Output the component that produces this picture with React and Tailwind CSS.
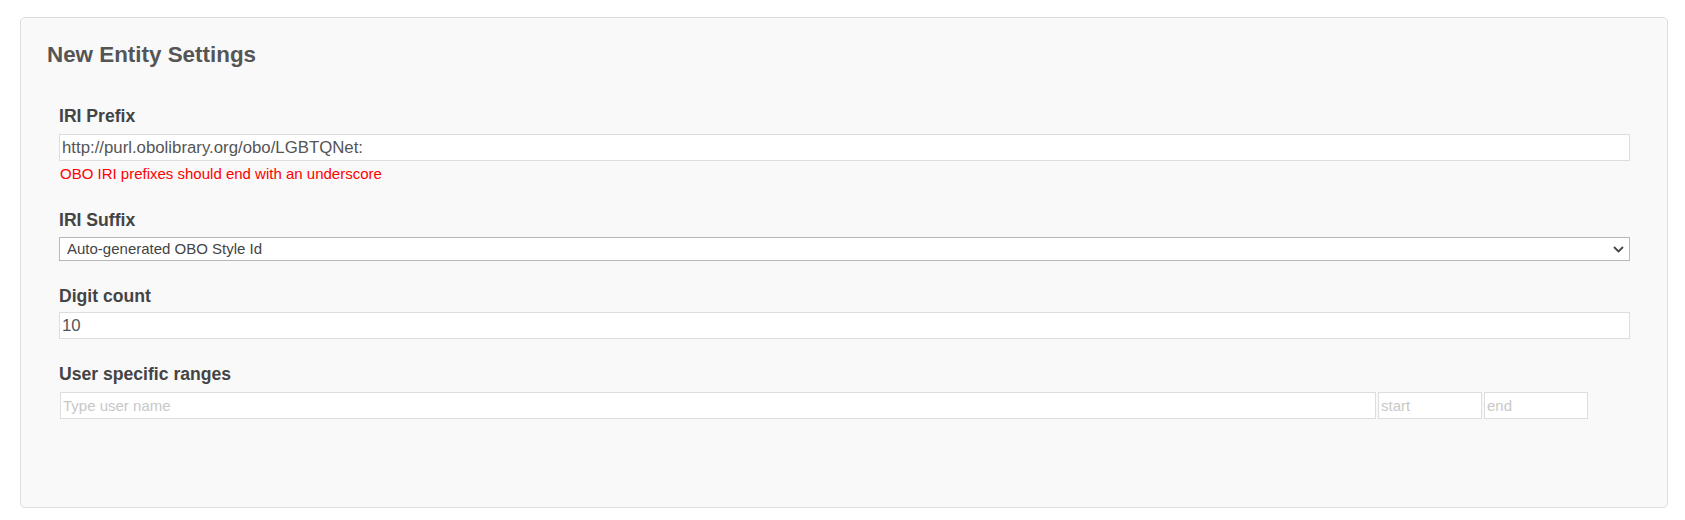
import React from 'react';

const Label = ({ children, className = '' }) => (
  <div className={`text-[17.6px] leading-[20px] font-bold text-[#444] ${className}`}>{children}</div>
);

export default function App() {
  return (
    <div className="min-h-[520px] bg-white pt-[17px] pl-[20px] font-['Liberation_Sans',Arial,sans-serif] text-[15px]">
      <div className="w-[1648px] h-[491px] rounded-[5px] border border-[#dddddd] bg-[#f9f9f9] pt-[24px] pl-[26px] pr-[37px]">
        <h2 className="text-[22.4px] leading-[26px] font-bold text-[#555]">New Entity Settings</h2>

        <div className="pl-[12px]">
          <Label className="mt-[38px]">IRI Prefix</Label>
          <input
            type="text"
            className="mt-[8px] block h-[27px] w-full border border-[#ddd] bg-white px-[2px] text-[16.8px] text-[#555] outline-none"
            defaultValue="http://purl.obolibrary.org/obo/LGBTQNet:"
          />
          <div className="mt-[4px] pl-[1px] text-[15px] leading-[18px] text-[#ff0000]">
            OBO IRI prefixes should end with an underscore
          </div>

          <Label className="mt-[27px]">IRI Suffix</Label>
          <div className="relative mt-[7px]">
            <select className="block h-[24px] w-full appearance-none border border-[#b8b8b8] bg-white pl-[7px] text-[15px] text-[#444] outline-none">
              <option>Auto-generated OBO Style Id</option>
            </select>
            <svg
              className="pointer-events-none absolute right-[6px] top-[9px]"
              width="11"
              height="7"
              viewBox="0 0 11 7"
              fill="none"
            >
              <path d="M1 1l4.5 4.5L10 1" stroke="#444" strokeWidth="1.8" />
            </svg>
          </div>

          <Label className="mt-[25px]">Digit count</Label>
          <input
            type="text"
            className="mt-[6px] block h-[27px] w-full border border-[#ddd] bg-white px-[2px] text-[16.8px] text-[#555] outline-none"
            defaultValue="10"
          />

          <Label className="mt-[25px]">User specific ranges</Label>
          <div className="mt-[8px] flex gap-[2px] pl-[1px] pr-[42px]">
            <input
              type="text"
              className="block h-[27px] min-w-0 flex-1 border border-[#ddd] bg-white px-[2px] text-[15px] text-[#555] outline-none placeholder:text-[#c8c8c8]"
              placeholder="Type user name"
            />
            <input
              type="text"
              className="block h-[27px] w-[104px] border border-[#ddd] bg-white px-[2px] text-[15px] text-[#555] outline-none placeholder:text-[#c8c8c8]"
              placeholder="start"
            />
            <input
              type="text"
              className="block h-[27px] w-[104px] border border-[#ddd] bg-white px-[2px] text-[15px] text-[#555] outline-none placeholder:text-[#c8c8c8]"
              placeholder="end"
            />
          </div>
        </div>
      </div>
    </div>
  );
}
